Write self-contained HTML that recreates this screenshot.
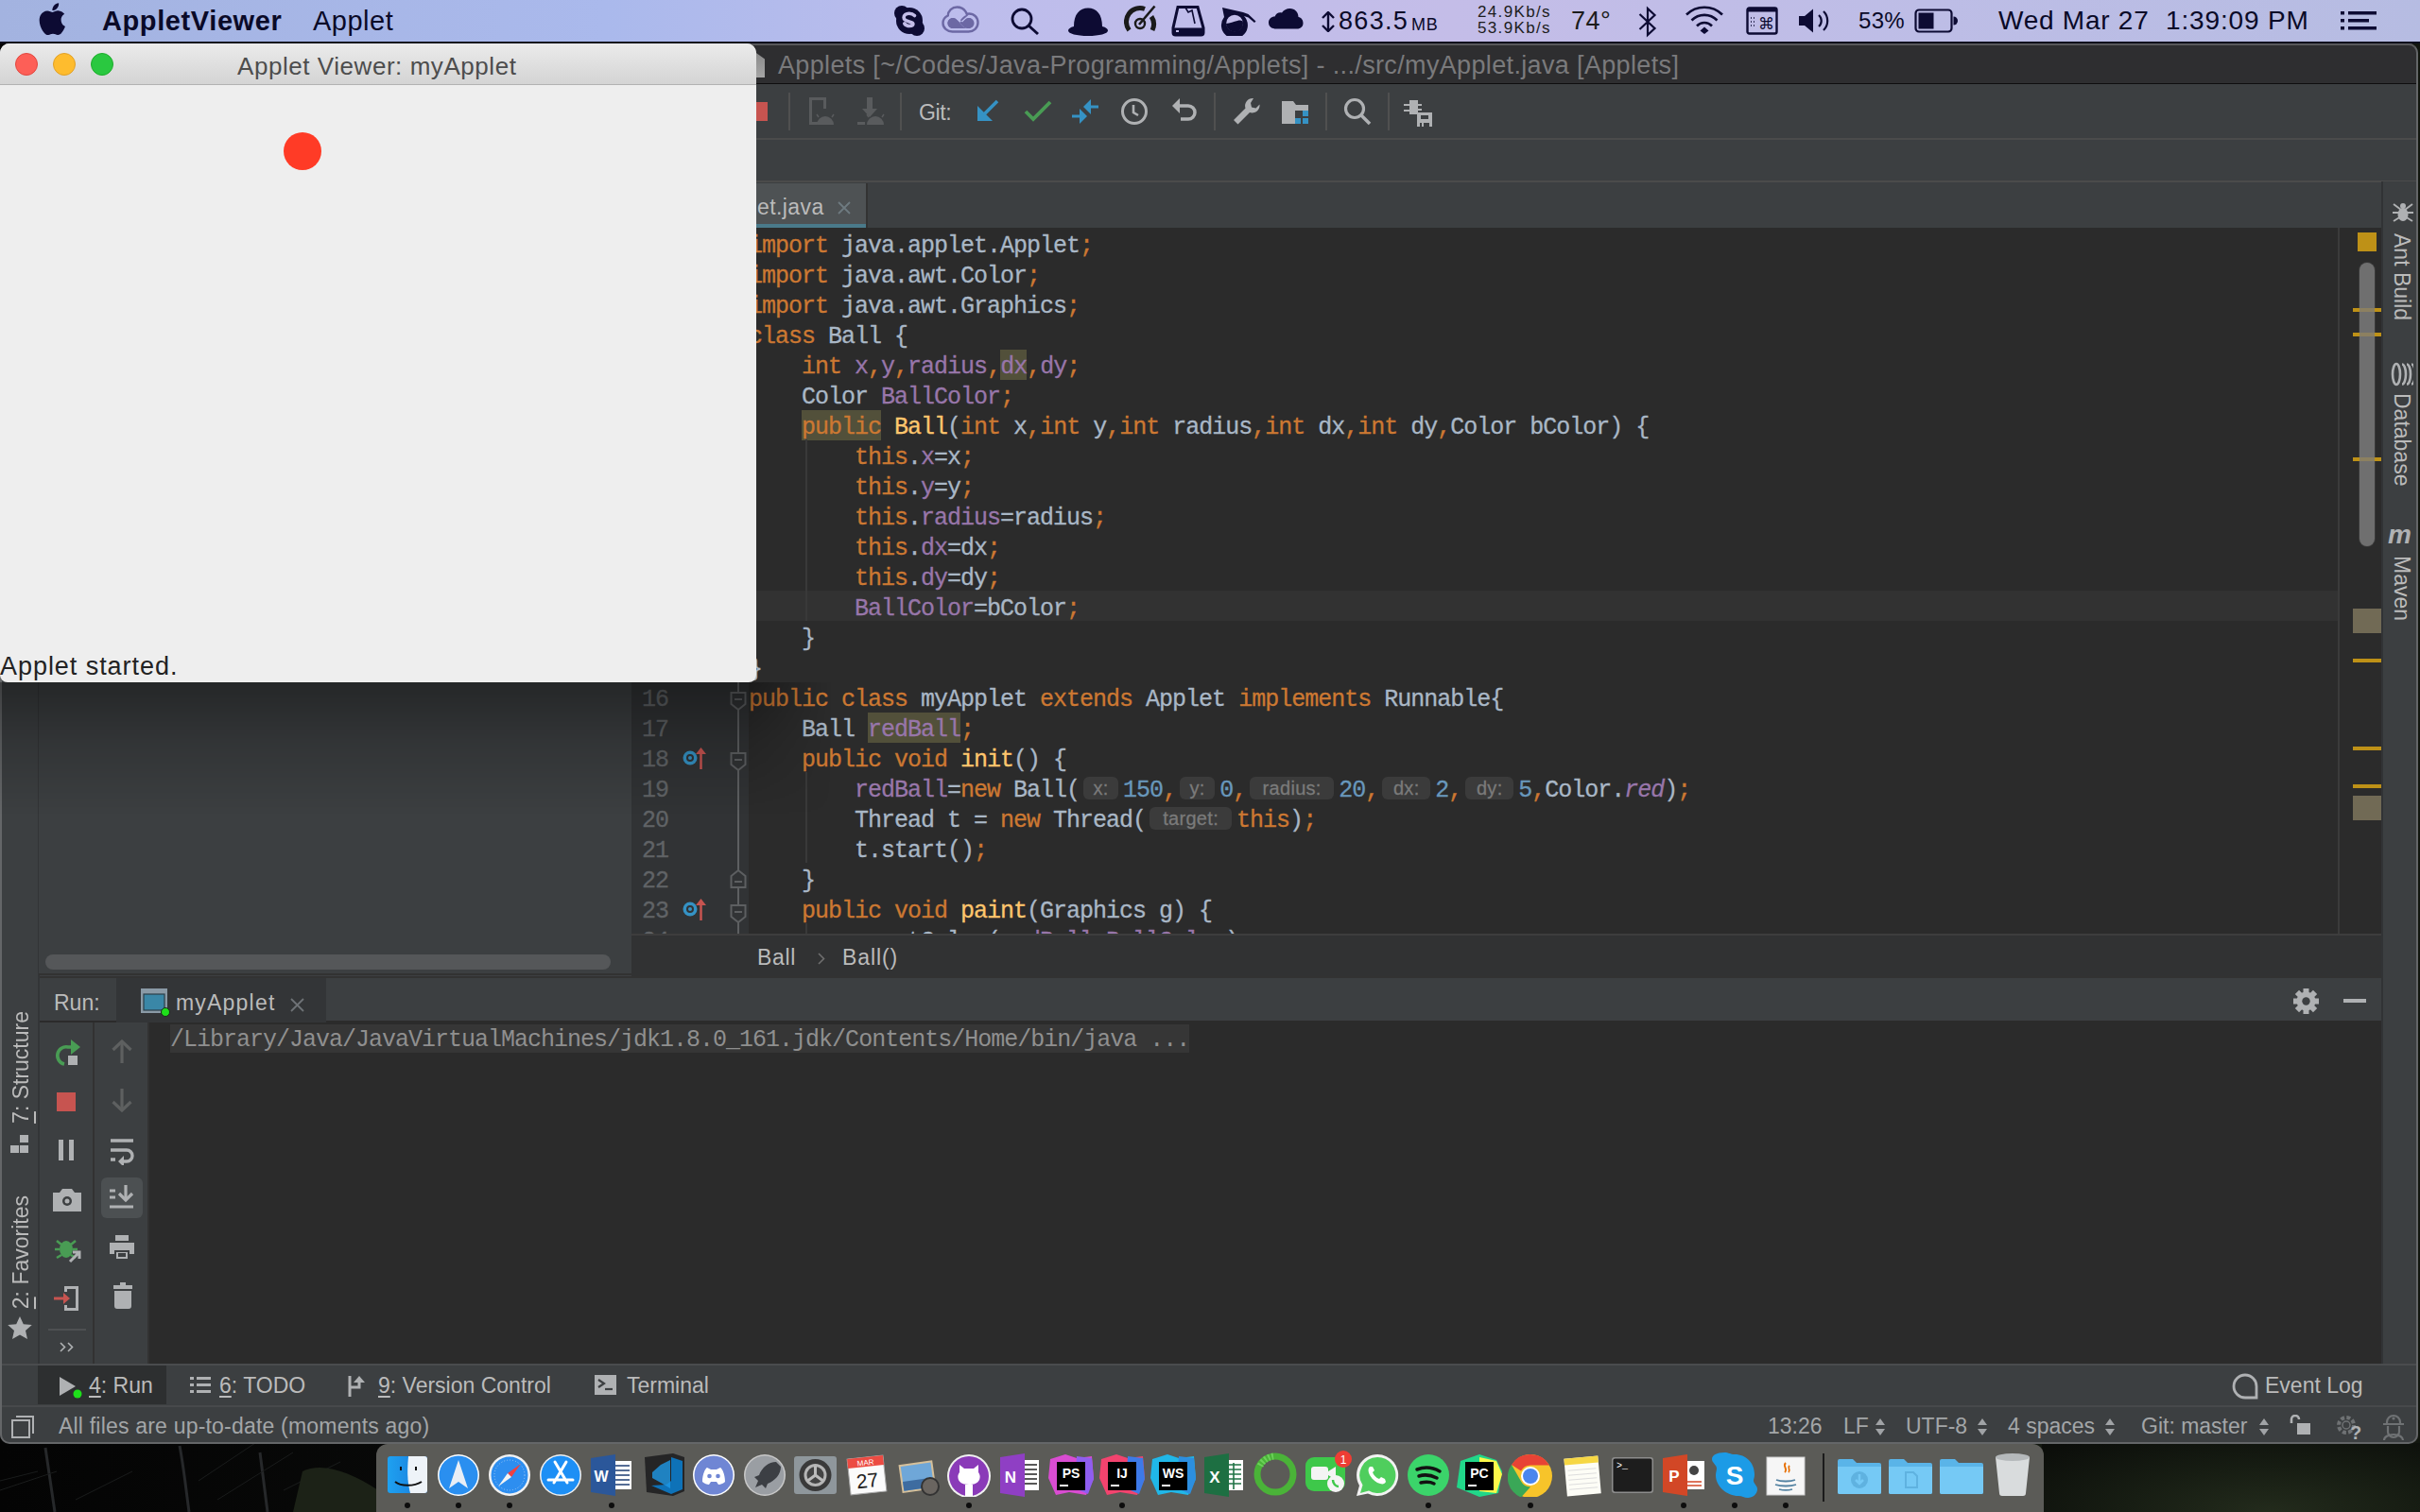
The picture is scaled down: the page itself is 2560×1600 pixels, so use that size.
<!DOCTYPE html>
<html><head><meta charset="utf-8">
<style>
*{margin:0;padding:0;box-sizing:border-box}
html,body{width:2560px;height:1600px;overflow:hidden;background:#101418;font-family:"Liberation Sans",sans-serif}
.a{position:absolute}
.mono{font-family:"Liberation Mono",monospace}
#desk{left:0;top:0;width:2560px;height:1600px;background:linear-gradient(90deg,#040404 0%,#0a0b0a 25%,#121510 50%,#151a12 75%,#12160f 100%)}
#menubar{left:0;top:0;width:2560px;height:44px;background:linear-gradient(90deg,#a3b3e0 0%,#aab9ec 25%,#bdbdec 40%,#c4bde8 60%,#bdbde6 80%,#b6bce2 100%);color:#0a0a28;font-size:29px;white-space:nowrap}
#mbline{left:0;top:44px;width:2560px;height:2px;background:#0c0d1c}
#ide{left:0;top:46px;width:2558px;height:1481px;background:#3c3f41;border-radius:10px;overflow:hidden}
#ititle{left:0;top:0;width:2558px;height:43px;background:#2e2e30;border-top:2px solid #5a5a5c;border-bottom:1px solid #0e0e0e}
#ititle span{position:absolute;left:823px;top:6px;font-size:27px;color:#7a7a7c;letter-spacing:0.35px}
#toolbar{left:0;top:44px;width:2558px;height:58px;background:#3c3f41;border-bottom:2px solid #4b4b4b}
#navbar{left:0;top:102px;width:2558px;height:45px;background:#3c3f41;border-bottom:2px solid #4b4b4b}
#lstripe{left:0;top:146px;width:42px;height:1252px;background:#3c3f41;border-right:2px solid #333537}
#rstripe{left:2519px;top:146px;width:39px;height:1252px;background:#3c3f41;border-left:2px solid #313335}
#proj{left:41px;top:146px;width:627px;height:840px;background:#3c3f41}
#tabs{left:668px;top:147px;width:1851px;height:49px;background:#3c3f41}
#gutter{left:668px;top:195px;width:124px;height:747px;background:#313335}
#editor{left:792px;top:195px;width:1727px;height:747px;background:#2b2b2b}
#bread{left:668px;top:942px;width:1851px;height:45px;background:#313233;border-top:2px solid #3d3d3d}
#runhdr{left:42px;top:987px;width:2477px;height:49px;background:#3c3f41;border-top:2px solid #323232;border-bottom:2px solid #2b2b2b}
#runtb{left:42px;top:1036px;width:116px;height:362px;background:#3c3f41}
#console{left:158px;top:1036px;width:2361px;height:362px;background:#2b2b2b}
#bottomtb{left:0;top:1397px;width:2558px;height:44px;background:#3c3f41;border-top:2px solid #4a4c4e}
#status{left:0;top:1441px;width:2558px;height:40px;background:#3c3f41;border-top:2px solid #47494b;color:#a3a6a8;font-size:23px}
#applet{left:0;top:46px;width:800px;height:676px;background:#eeeeee;border-radius:10px 10px 8px 8px;overflow:hidden}
#atitle{left:0;top:0;width:800px;height:44px;background:linear-gradient(#ebebeb,#d4d4d4);border-bottom:1px solid #b2b2b2}
#dock{left:398px;top:1528px;width:1764px;height:80px;background:#5b5b57;border-radius:12px 12px 0 0}
.code{font-family:"Liberation Mono",monospace;font-size:25px;letter-spacing:-1px;-webkit-text-stroke:0.3px currentColor;white-space:pre;color:#a9b7c6;position:absolute;line-height:32px}
.k{color:#cc7832}.sel{}.h{display:inline-block;height:24px;vertical-align:top;margin:1px 5px 0 4px;background:#3b3b3b;border-radius:6px;color:#7a7a7a;font-family:"Liberation Sans",sans-serif;font-size:20px;line-height:24px;text-align:center;letter-spacing:0.3px}.f{color:#9876aa}.m{color:#ffc66d}.n{color:#6897bb}
</style></head><body>
<div id="desk" class="a"></div>
<div class="a" style="left:2160px;top:1527px;width:400px;height:73px;background:radial-gradient(ellipse at 60% 100%,#232b1c 0%,#171d13 45%,#0a0c09 100%)"></div>
<svg class="a" style="left:0;top:1527px" width="400" height="73" viewBox="0 0 400 73"><g stroke="#26282a" stroke-width="3" fill="none"><path d="M48 5L58 73"/><path d="M190 3c4 20 6 40 10 70"/><path d="M275 10l8 63"/></g><g stroke="#1a1c1c" stroke-width="1" fill="none"><path d="M0 50L60 30M0 40l40-10M80 60l60-30M210 40l60-40M230 60l80-50M300 50l60-30"/></g><path d="M320 30c20-10 50 0 80 20v23h-90z" fill="#1c2217"/></svg>
<div id="menubar" class="a">
  <svg class="a" style="left:40px;top:3px" width="30" height="34" viewBox="0 0 30 34"><path fill="#0d0b33" d="M24.6 18.1c0-4.2 3.4-6.2 3.6-6.3-2-2.9-5.1-3.3-6.1-3.4-2.6-.3-5.1 1.5-6.4 1.5-1.3 0-3.4-1.5-5.6-1.5-2.9 0-5.5 1.7-7 4.3-3 5.2-.8 12.9 2.1 17.1 1.4 2.1 3.1 4.4 5.3 4.3 2.1-.1 2.9-1.4 5.5-1.4 2.5 0 3.3 1.4 5.5 1.3 2.3 0 3.7-2.1 5.1-4.2 1.6-2.4 2.3-4.7 2.3-4.8-.1 0-4.3-1.7-4.3-6.9zM20.4 5.7c1.2-1.4 2-3.4 1.7-5.4-1.7.1-3.7 1.1-4.9 2.5-1.1 1.3-2 3.3-1.8 5.3 1.9.1 3.8-1 5-2.4z"/></svg>
  <span class="a" style="left:108px;top:6px;font-weight:bold;letter-spacing:0.6px">AppletViewer</span>
  <span class="a" style="left:331px;top:6px;letter-spacing:0.5px">Applet</span>
  <!-- skype -->
  <svg class="a" style="left:945px;top:5px" width="34" height="34" viewBox="0 0 34 34"><circle cx="17" cy="17" r="14" fill="#0d0b33"/><circle cx="9" cy="9" r="8" fill="#0d0b33"/><circle cx="25" cy="25" r="8" fill="#0d0b33"/><path d="M22.5 11.5c-1.5-1.5-3.5-2.2-5.8-2.2-3.3 0-5.6 1.7-5.6 4.3 0 5.3 9.8 3.4 9.8 6.6 0 1.3-1.5 2.3-3.8 2.3-2.3 0-4-.9-5.3-2.5" fill="none" stroke="#c3bde9" stroke-width="3.6" stroke-linecap="round"/></svg>
  <!-- creative cloud -->
  <svg class="a" style="left:996px;top:6px" width="40" height="30" viewBox="0 0 40 30"><path d="M11.5 27.5h17c5.5 0 10-4 10-9.5S34.5 8.5 29 8.5c-1 0-1.5 .1-2.3 .3C25 4.5 21 1.5 16.5 1.5 11 1.5 7 5.5 6.8 10.5 3.5 12 1.5 15 1.5 18.5c0 5 4.5 9 10 9z" fill="none" stroke="#6c68a4" stroke-width="2.4"/><path d="M12 24c-3 0-5.5-2.5-5.5-5.5S9 13 12 13c2.2 0 3.5 1.2 5 2.8l5 5.2c1.5 1.6 2.8 3 5.5 3h1.5c3 0 5.5-2.5 5.5-5.5S32 13 29 13c-2.2 0-3.5 1.2-5 2.8l-1.8 1.9-2.4-2.5 1.8-1.9C23.5 11.2 26 9.5 29 9.5" fill="#6c68a4"/><path d="M12 24c-3 0-5.5-2.5-5.5-5.5S9 13 12 13c2.2 0 3.5 1.2 5 2.8l5 5.2c1.5 1.6 2.8 3 5.5 3z" fill="#6c68a4"/><path d="M27.5 24c3 0 6.5-2.5 6.5-5.5S31.5 13 29 13c-2.2 0-3.5 1.2-5 2.8l-2 2z" fill="#6c68a4"/></svg>
  <!-- search -->
  <svg class="a" style="left:1069px;top:8px" width="32" height="30" viewBox="0 0 32 30"><circle cx="12" cy="12" r="10" fill="none" stroke="#0d0b33" stroke-width="2.8"/><path d="M19 19l10 9" stroke="#0d0b33" stroke-width="3"/></svg>
  <!-- hat -->
  <svg class="a" style="left:1129px;top:7px" width="44" height="32" viewBox="0 0 44 32"><path fill="#0d0b33" d="M7 21C7 8 13 1.5 22 1.5S37 8 37 21c4 1 6 2.5 6 4.5 0 3-9 5.5-21 5.5S1 28.5 1 25.5c0-2 2-3.5 6-4.5z"/></svg>
  <!-- gauge -->
  <svg class="a" style="left:1189px;top:5px" width="36" height="30" viewBox="0 0 36 30"><path fill="none" stroke="#1a1a1a" stroke-width="5" d="M5.5 27A14.5 14.5 0 0 1 22 4.5"/><path fill="none" stroke="#1a1a1a" stroke-width="5" d="M29 12.5A14.5 14.5 0 0 1 30 27"/><circle cx="17" cy="20" r="5" fill="none" stroke="#1a1a1a" stroke-width="2.4"/><path d="M16 21L32.5 1.5" stroke="#1a1a1a" stroke-width="2.6"/></svg>
  <!-- disk -->
  <svg class="a" style="left:1239px;top:5px" width="36" height="34" viewBox="0 0 36 34"><path fill="none" stroke="#0d0b33" stroke-width="3" d="M7 2.5h21l6 22v5a2.5 2.5 0 0 1-2.5 2.5h-27A2.5 2.5 0 0 1 2 29.5v-5z"/><path fill="#0d0b33" d="M2 24.5h32v5a3 3 0 0 1-3 3H5a3 3 0 0 1-3-3z"/><rect x="5" y="27" width="3" height="2" fill="#c3bde9"/><path d="M15 3l3 5 4-2 3 14" fill="none" stroke="#0d0b33" stroke-width="1.6"/></svg>
  <!-- coffee pot -->
  <svg class="a" style="left:1291px;top:7px" width="40" height="31" viewBox="0 0 40 31"><path fill="#0d0b33" d="M2 1l22 5 5.5 2 8 7.5-1.5 1.5-6.5-5.5L25 10A14 14 0 1 1 4 11z"/><circle cx="15" cy="17.5" r="9.5" fill="#c3bde9"/><path fill="#0d0b33" d="M6 18c4-.5 8-2 12-3s6 0 6 2.5a9 9 0 0 1-18 .5z"/><circle cx="15" cy="17.5" r="9.5" fill="none" stroke="#0d0b33" stroke-width="1.5"/></svg>
  <!-- cloud -->
  <svg class="a" style="left:1341px;top:9px" width="38" height="24" viewBox="0 0 38 24"><path fill="#0d0b33" d="M9 21.5C5 21.5 1 19.5 1 15c0-4 3-6.5 6.5-6.5C9 5 12 3.5 15 4.5 17 1.5 20 0 23.5 0 29 0 32.5 4 32.5 9c3 .5 5 3 5 6.5 0 3.5-2.5 6-6.5 6z"/></svg>
  <!-- arrows -->
  <svg class="a" style="left:1398px;top:12px" width="14" height="22" viewBox="0 0 14 22"><path d="M7 2v18" stroke="#0d0b33" stroke-width="2.4"/><path d="M1 7l6-6 6 6M1 15l6 6 6-6" fill="none" stroke="#0d0b33" stroke-width="2.4"/></svg>
  <span class="a" style="left:1416px;top:7px;font-size:27px;letter-spacing:1.3px">863.5</span>
  <span class="a" style="left:1493px;top:16px;font-size:18px;letter-spacing:0.8px">MB</span>
  <div class="a" style="left:1563px;top:4px;font-size:17px;line-height:17px;letter-spacing:1.35px;color:#1c1c1c">24.9Kb/s<br>53.9Kb/s</div>
  <span class="a" style="left:1662px;top:7px;font-size:27px;color:#1c1c1c;letter-spacing:0.5px">74°</span>
  <!-- bluetooth -->
  <svg class="a" style="left:1733px;top:6px" width="20" height="34" viewBox="0 0 20 34"><path d="M1.5 9l16 15L10 31V3l7.5 7L1.5 25" fill="none" stroke="#0d0b33" stroke-width="2.2"/></svg>
  <!-- wifi -->
  <svg class="a" style="left:1782px;top:6px" width="42" height="31" viewBox="0 0 42 31"><path d="M2 9.5a27 27 0 0 1 38 0M7.5 15.5a19 19 0 0 1 27 0M13 21.5a11 11 0 0 1 16 0" fill="none" stroke="#0d0b33" stroke-width="2.6"/><path d="M16.5 26.5l4.5-4 4.5 4-4.5 3.5z" fill="#0d0b33"/></svg>
  <!-- cmd window -->
  <svg class="a" style="left:1847px;top:7px" width="34" height="30" viewBox="0 0 34 30"><rect x="1.5" y="1.5" width="31" height="27" rx="2" fill="none" stroke="#0d0b33" stroke-width="2.4"/><rect x="1.5" y="1.5" width="31" height="4" fill="#0d0b33"/><text x="21" y="24" font-size="17" font-family="Liberation Sans" fill="#0d0b33" text-anchor="middle">⌘</text><path d="M5 12h1M5 16h1M5 20h1M8 12h1M8 16h1M8 20h1" stroke="#0d0b33" stroke-width="1.5"/></svg>
  <!-- speaker -->
  <svg class="a" style="left:1903px;top:9px" width="34" height="26" viewBox="0 0 34 26"><path fill="#0d0b33" d="M0 8h6l9-7.5v25L6 18H0z"/><path d="M21 7a8 8 0 0 1 0 12M26 3a14 14 0 0 1 0 20" fill="none" stroke="#0d0b33" stroke-width="2.2"/></svg>
  <span class="a" style="left:1966px;top:8px;font-size:24px;letter-spacing:0.3px">53%</span>
  <svg class="a" style="left:2025px;top:9px" width="48" height="26" viewBox="0 0 48 26"><rect x="1.5" y="1.5" width="38" height="23" rx="3.5" fill="none" stroke="#0d0b33" stroke-width="2.2"/><rect x="4.5" y="4.5" width="16" height="17" fill="#0d0b33"/><path d="M41.5 8.5a4.5 4.5 0 0 1 0 9z" fill="#0d0b33"/></svg>
  <span class="a" style="left:2114px;top:6px;font-size:28px;letter-spacing:0.75px">Wed Mar 27</span>
  <span class="a" style="left:2291px;top:6px;font-size:28px;letter-spacing:0.85px">1:39:09 PM</span>
  <svg class="a" style="left:2476px;top:12px" width="38" height="20" viewBox="0 0 38 20"><path fill="#0d0b33" d="M0 0h4v3.5H0zM0 8h4v3.5H0zM0 16h4v3.5H0zM8 0h30v3.5H8zM8 8h22v3.5H8zM8 16h30v3.5H8z"/></svg>
</div>
<div id="mbline" class="a"></div>

<div id="ide" class="a">
  <div id="ititle" class="a"><div class="a" style="left:790px;top:7px;width:19px;height:27px;background:linear-gradient(#8a8a8a,#a5a5a5);clip-path:polygon(0 0,45% 0,100% 28%,100% 100%,0 100%)"></div><span>Applets [~/Codes/Java-Programming/Applets] - .../src/myApplet.java [Applets]</span></div>
  <div id="toolbar" class="a">
  <div class="a" style="left:790px;top:18px;width:22px;height:20px;background:#c75450"></div>
  <div class="a" style="left:834px;top:8px;width:2px;height:40px;background:#505050"></div>
  <svg class="a" style="left:855px;top:12px" width="30" height="32" viewBox="0 0 30 32"><path fill="#595b5d" d="M1 1h18v12h-3V4H4v23h6v3H1z"/><path fill="#595b5d" d="M9 30a9 9 0 0 1 18 0z"/><path d="M11 22l-2-3M25 22l2-3" stroke="#595b5d" stroke-width="1.5"/></svg>
  <svg class="a" style="left:907px;top:12px" width="30" height="32" viewBox="0 0 30 32"><path fill="#595b5d" d="M10 1h6v12h5l-8 9-8-9h5zM0 27h8v3H0z"/><path fill="#595b5d" d="M10 30a9 9 0 0 1 18 0z"/><path d="M12 22l-2-3M26 22l2-3" stroke="#595b5d" stroke-width="1.5"/></svg>
  <div class="a" style="left:952px;top:8px;width:2px;height:40px;background:#505050"></div>
  <span class="a" style="left:972px;top:16px;font-size:23px;color:#bbbbbb;letter-spacing:-0.4px">Git:</span>
  <svg class="a" style="left:1033px;top:15px" width="24" height="24" viewBox="0 0 24 24"><path d="M22 2L5 19" stroke="#3592c4" stroke-width="3.5"/><path d="M1 7v16h16z" fill="#3592c4"/></svg>
  <svg class="a" style="left:1083px;top:15px" width="30" height="24" viewBox="0 0 30 24"><path d="M2 13l8 8L28 3" fill="none" stroke="#499c54" stroke-width="3.8"/></svg>
  <svg class="a" style="left:1133px;top:13px" width="30" height="30" viewBox="0 0 30 30"><path d="M1 20h12M29 10H17" stroke="#3592c4" stroke-width="3"/><path d="M9 12l8 8-8 8zM21 2l-8 8 8 8z" fill="#3592c4"/></svg>
  <svg class="a" style="left:1185px;top:13px" width="30" height="30" viewBox="0 0 30 30"><circle cx="15" cy="15" r="12.5" fill="none" stroke="#afb1b3" stroke-width="3"/><path d="M14 8v8l5 3" fill="none" stroke="#afb1b3" stroke-width="2.6"/></svg>
  <svg class="a" style="left:1239px;top:13px" width="28" height="28" viewBox="0 0 28 28"><path d="M6 9h12a7 7 0 0 1 0 14h-8" fill="none" stroke="#afb1b3" stroke-width="3.5"/><path d="M1 9l8-8v16z" fill="#afb1b3"/></svg>
  <div class="a" style="left:1284px;top:8px;width:2px;height:40px;background:#505050"></div>
  <svg class="a" style="left:1304px;top:13px" width="30" height="30" viewBox="0 0 30 30"><path fill="#afb1b3" d="M22 1a8 8 0 0 0-8.5 10.5L1 24l4.5 4.5L18 16a8 8 0 0 0 10.5-8.5l-4 4-4.5-1-1-4.5z"/></svg>
  <svg class="a" style="left:1356px;top:17px" width="30" height="26" viewBox="0 0 30 26"><path fill="#afb1b3" d="M0 0h12l3 4h13v6H14v14H0z"/><path fill="#3592c4" d="M22 10h6v6h-6zM14 18h6v6h-6zM22 18h6v6h-6z"/></svg>
  <div class="a" style="left:1402px;top:8px;width:2px;height:40px;background:#505050"></div>
  <svg class="a" style="left:1421px;top:13px" width="30" height="30" viewBox="0 0 30 30"><circle cx="12" cy="12" r="9.5" fill="none" stroke="#afb1b3" stroke-width="3.2"/><path d="M18.5 18.5L28 28" stroke="#afb1b3" stroke-width="3.6"/></svg>
  <div class="a" style="left:1468px;top:8px;width:2px;height:40px;background:#505050"></div>
  <svg class="a" style="left:1485px;top:15px" width="32" height="30" viewBox="0 0 32 30"><path fill="#afb1b3" d="M6 1h9v4h4v2h-4v3h4v2h-4v4H6v-3H0v-2h6V7H0V5h6z"/><path fill="#afb1b3" d="M14 14h16v15h-3v-4h-10v4h-3zM18 21h8v-4h-8z"/><path fill="#afb1b3" d="M19 25h2v4h-2z"/></svg>
</div>
  <div id="navbar" class="a"></div>
  <div id="lstripe" class="a">
  <div class="a" style="left:0;top:0;width:2px;height:1252px;background:#5b5e60"></div>
  <div class="a" style="left:8px;top:878px;writing-mode:vertical-rl;transform:rotate(180deg);font-size:23px;line-height:28px;color:#bbbbbb;white-space:nowrap"><u style="text-underline-offset:2px">7</u>: Structure</div>
  <svg class="a" style="left:10px;top:1009px" width="22" height="20" viewBox="0 0 22 20"><path fill="#afb1b3" d="M10 0h9v8h-9zM0 11h9v8H0zM10 11h9v8h-9z" transform="translate(1 0)"/></svg>
  <div class="a" style="left:8px;top:1073px;writing-mode:vertical-rl;transform:rotate(180deg);font-size:23px;line-height:28px;color:#bbbbbb;white-space:nowrap"><u style="text-underline-offset:2px">2</u>: Favorites</div>
  <svg class="a" style="left:8px;top:1201px" width="26" height="25" viewBox="0 0 26 25"><path fill="#afb1b3" d="M13 0l3.8 8.2 9 .9-6.8 6 2 8.9L13 19.4 5 24l2-8.9-6.8-6 9-.9z"/></svg>
</div>
  <div id="rstripe" class="a">
  <svg class="a" style="left:8px;top:20px" width="24" height="24" viewBox="0 0 24 24"><g fill="#afb1b3"><ellipse cx="13" cy="15" rx="5.5" ry="7"/><circle cx="13" cy="6" r="3"/><path d="M3 4l8 6M23 4l-8 6M2 13h9M24 13h-9M3 22l8-5M23 22l-8-5" stroke="#afb1b3" stroke-width="2"/></g></svg>
  <div class="a" style="left:6px;top:55px;writing-mode:vertical-rl;font-size:23px;line-height:28px;color:#bbbbbb;white-space:nowrap">Ant Build</div>
  <svg class="a" style="left:8px;top:191px" width="24" height="26" viewBox="0 0 24 26"><g fill="none" stroke="#afb1b3" stroke-width="2.6"><ellipse cx="6" cy="13" rx="4" ry="11"/><path d="M12 2.5a4 10.5 0 0 1 0 21M17 2.5a4 10.5 0 0 1 0 21M22 2.5a4 10.5 0 0 1 0 21"/></g></svg>
  <div class="a" style="left:6px;top:224px;writing-mode:vertical-rl;font-size:23px;line-height:28px;color:#bbbbbb;white-space:nowrap">Database</div>
  <div class="a" style="left:5px;top:360px;font-size:28px;line-height:28px;font-weight:bold;font-style:italic;color:#afb1b3">m</div>
  <div class="a" style="left:6px;top:396px;writing-mode:vertical-rl;font-size:23px;line-height:28px;color:#bbbbbb;white-space:nowrap">Maven</div>
</div>
  <div id="proj" class="a">
  <div class="a" style="left:7px;top:818px;width:598px;height:16px;border-radius:8px;background:#555759"></div>
  <div class="a" style="left:0;top:838px;width:627px;height:2px;background:#323232"></div>
</div>
  <div id="tabs" class="a">
  <div class="a" style="left:0;top:1px;width:248px;height:43px;background:#4e5254"></div>
  <div class="a" style="left:0;top:44px;width:248px;height:6px;background:#4a7a8a"></div>
  <div class="a" style="left:248px;top:1px;width:2px;height:49px;background:#333"></div>
  <span class="a" style="left:54px;top:13px;font-size:23px;color:#bbbbbb;white-space:nowrap;letter-spacing:0.4px">myApplet.java</span>
  <svg class="a" style="left:218px;top:20px" width="14" height="14" viewBox="0 0 14 14"><path d="M1 1l12 12M13 1L1 13" stroke="#6e7a80" stroke-width="1.8"/></svg>
</div>
  <div id="gutter" class="a">
  <svg class="a" style="left:0;top:0" width="124" height="747"><path d="M113 481 V747" stroke="#5d5f61" stroke-width="2"/><path d="M105.5 492.0 h15 v12 l-7.5 6 l-7.5 -6 z" fill="#313335" stroke="#5d5f61" stroke-width="2"/><path d="M109 499.0 h8" stroke="#5d5f61" stroke-width="2"/><path d="M105.5 556.0 h15 v12 l-7.5 6 l-7.5 -6 z" fill="#313335" stroke="#5d5f61" stroke-width="2"/><path d="M109 563.0 h8" stroke="#5d5f61" stroke-width="2"/><path d="M105.5 686.0 l7.5 -6 l7.5 6 v12 h-15 z" fill="#313335" stroke="#5d5f61" stroke-width="2"/><path d="M109 692.0 h8" stroke="#5d5f61" stroke-width="2"/><path d="M105.5 717.0 h15 v12 l-7.5 6 l-7.5 -6 z" fill="#313335" stroke="#5d5f61" stroke-width="2"/><path d="M109 724.0 h8" stroke="#5d5f61" stroke-width="2"/><circle cx="62" cy="561" r="7.5" fill="#3592c4"/><circle cx="62" cy="561" r="3" fill="none" stroke="#313335" stroke-width="2"/><path d="M73.5 573 v-18" stroke="#c75450" stroke-width="2.5"/><path d="M68 557 l5.5 -7 l5.5 7 z" fill="#c75450"/><circle cx="62" cy="721" r="7.5" fill="#3592c4"/><circle cx="62" cy="721" r="3" fill="none" stroke="#313335" stroke-width="2"/><path d="M73.5 733 v-18" stroke="#c75450" stroke-width="2.5"/><path d="M68 717 l5.5 -7 l5.5 7 z" fill="#c75450"/></svg><div class="a" style="left:0;top:0;width:124px;height:747px"><div class="a mono" style="left:0;top:480px;width:39px;text-align:right;font-size:25px;letter-spacing:-1px;line-height:32px;color:#606366;margin-top:4px;-webkit-text-stroke:0.3px #606366">16</div>
<div class="a mono" style="left:0;top:512px;width:39px;text-align:right;font-size:25px;letter-spacing:-1px;line-height:32px;color:#606366;margin-top:4px;-webkit-text-stroke:0.3px #606366">17</div>
<div class="a mono" style="left:0;top:544px;width:39px;text-align:right;font-size:25px;letter-spacing:-1px;line-height:32px;color:#606366;margin-top:4px;-webkit-text-stroke:0.3px #606366">18</div>
<div class="a mono" style="left:0;top:576px;width:39px;text-align:right;font-size:25px;letter-spacing:-1px;line-height:32px;color:#606366;margin-top:4px;-webkit-text-stroke:0.3px #606366">19</div>
<div class="a mono" style="left:0;top:608px;width:39px;text-align:right;font-size:25px;letter-spacing:-1px;line-height:32px;color:#606366;margin-top:4px;-webkit-text-stroke:0.3px #606366">20</div>
<div class="a mono" style="left:0;top:640px;width:39px;text-align:right;font-size:25px;letter-spacing:-1px;line-height:32px;color:#606366;margin-top:4px;-webkit-text-stroke:0.3px #606366">21</div>
<div class="a mono" style="left:0;top:672px;width:39px;text-align:right;font-size:25px;letter-spacing:-1px;line-height:32px;color:#606366;margin-top:4px;-webkit-text-stroke:0.3px #606366">22</div>
<div class="a mono" style="left:0;top:704px;width:39px;text-align:right;font-size:25px;letter-spacing:-1px;line-height:32px;color:#606366;margin-top:4px;-webkit-text-stroke:0.3px #606366">23</div>
<div class="a mono" style="left:0;top:736px;width:39px;text-align:right;font-size:25px;letter-spacing:-1px;line-height:32px;color:#606366;margin-top:4px;-webkit-text-stroke:0.3px #606366">24</div></div>
</div>
  <div id="editor" class="a">
  <div class="a" style="left:0;top:384px;width:1681px;height:32px;background:#323232"></div>
  <div class="a" style="left:266px;top:129px;width:28px;height:32px;background:#52503a"></div>
  <div class="a" style="left:56px;top:193px;width:84px;height:32px;background:#52503a"></div>
  <div class="a" style="left:126px;top:513px;width:98px;height:32px;background:#52503a"></div>
  <div class="a" style="left:60px;top:224px;width:2px;height:192px;background:#393939"></div>
  <div class="a" style="left:60px;top:576px;width:2px;height:96px;background:#393939"></div>
  <div class="a" style="left:60px;top:736px;width:2px;height:12px;background:#393939"></div>
<div class="code" style="left:0;margin-top:4px;top:0px"><span class="k">import</span> java.applet.Applet<span class="k">;</span></div>
<div class="code" style="left:0;margin-top:4px;top:32px"><span class="k">import</span> java.awt.Color<span class="k">;</span></div>
<div class="code" style="left:0;margin-top:4px;top:64px"><span class="k">import</span> java.awt.Graphics<span class="k">;</span></div>
<div class="code" style="left:0;margin-top:4px;top:96px"><span class="k">class</span> Ball {</div>
<div class="code" style="left:0;margin-top:4px;top:128px">    <span class="k">int</span> <span class="f">x</span><span class="k">,</span><span class="f">y</span><span class="k">,</span><span class="f">radius</span><span class="k">,</span><span class="sel"><span class="f">dx</span></span><span class="k">,</span><span class="f">dy</span><span class="k">;</span></div>
<div class="code" style="left:0;margin-top:4px;top:160px">    Color <span class="f">BallColor</span><span class="k">;</span></div>
<div class="code" style="left:0;margin-top:4px;top:192px">    <span class="sel"><span class="k">public</span></span> <span class="m">Ball</span>(<span class="k">int</span> x<span class="k">,</span><span class="k">int</span> y<span class="k">,</span><span class="k">int</span> radius<span class="k">,</span><span class="k">int</span> dx<span class="k">,</span><span class="k">int</span> dy<span class="k">,</span>Color bColor) {</div>
<div class="code" style="left:0;margin-top:4px;top:224px">        <span class="k">this</span>.<span class="f">x</span>=x<span class="k">;</span></div>
<div class="code" style="left:0;margin-top:4px;top:256px">        <span class="k">this</span>.<span class="f">y</span>=y<span class="k">;</span></div>
<div class="code" style="left:0;margin-top:4px;top:288px">        <span class="k">this</span>.<span class="f">radius</span>=radius<span class="k">;</span></div>
<div class="code" style="left:0;margin-top:4px;top:320px">        <span class="k">this</span>.<span class="f">dx</span>=dx<span class="k">;</span></div>
<div class="code" style="left:0;margin-top:4px;top:352px">        <span class="k">this</span>.<span class="f">dy</span>=dy<span class="k">;</span></div>
<div class="code" style="left:0;margin-top:4px;top:384px">        <span class="f">BallColor</span>=bColor<span class="k">;</span></div>
<div class="code" style="left:0;margin-top:4px;top:416px">    }</div>
<div class="code" style="left:0;margin-top:4px;top:448px">}</div>
<div class="code" style="left:0;margin-top:4px;top:480px"><span class="k">public class</span> myApplet <span class="k">extends</span> Applet <span class="k">implements</span> Runnable{</div>
<div class="code" style="left:0;margin-top:4px;top:512px">    Ball <span class="sel"><span class="f">redBall</span></span><span class="k">;</span></div>
<div class="code" style="left:0;margin-top:4px;top:544px">    <span class="k">public void</span> <span class="m">init</span>() {</div>
<div class="code" style="left:0;margin-top:4px;top:576px">        <span class="f">redBall</span>=<span class="k">new</span> Ball(<span class="h" style="width:37px">x:</span><span class="n">150</span><span class="k">,</span><span class="h" style="width:37px">y:</span><span class="n">0</span><span class="k">,</span><span class="h" style="width:89px">radius:</span><span class="n">20</span><span class="k">,</span><span class="h" style="width:51px">dx:</span><span class="n">2</span><span class="k">,</span><span class="h" style="width:51px">dy:</span><span class="n">5</span><span class="k">,</span>Color.<i class="f">red</i>)<span class="k">;</span></div>
<div class="code" style="left:0;margin-top:4px;top:608px">        Thread t = <span class="k">new</span> Thread(<span class="h" style="width:87px">target:</span><span class="k">this</span>)<span class="k">;</span></div>
<div class="code" style="left:0;margin-top:4px;top:640px">        t.start()<span class="k">;</span></div>
<div class="code" style="left:0;margin-top:4px;top:672px">    }</div>
<div class="code" style="left:0;margin-top:4px;top:704px">    <span class="k">public void</span> <span class="m">paint</span>(Graphics g) {</div>
<div class="code" style="left:0;margin-top:4px;top:736px">        g.setColor(<span class="f">redBall</span>.<span class="f">BallColor</span>)<span class="k">;</span></div>
  <div class="a" style="left:1681px;top:0;width:2px;height:747px;background:#3b3b3b"></div>
  <div class="a" style="left:1683px;top:0;width:44px;height:747px;background:#2b2b2b"></div>
  <div class="a" style="left:1702px;top:5px;width:20px;height:20px;background:#be9117"></div>
  <div class="a" style="left:1704px;top:37px;width:16px;height:300px;border-radius:8px;background:#6f6f6f;box-shadow:0 0 0 1px #3a3a3a"></div>
  <div class="a" style="left:1697px;top:85px;width:30px;height:4px;background:#be9117"></div>
  <div class="a" style="left:1704px;top:85px;width:16px;height:4px;background:#8c8060"></div>
  <div class="a" style="left:1697px;top:111px;width:30px;height:4px;background:#be9117"></div>
  <div class="a" style="left:1704px;top:111px;width:16px;height:4px;background:#8c8060"></div>
  <div class="a" style="left:1697px;top:243px;width:30px;height:4px;background:#be9117"></div>
  <div class="a" style="left:1704px;top:243px;width:16px;height:4px;background:#8c8060"></div>
  <div class="a" style="left:1697px;top:403px;width:30px;height:26px;background:#716a55"></div>
  <div class="a" style="left:1697px;top:456px;width:30px;height:4px;background:#be9117"></div>
  <div class="a" style="left:1697px;top:549px;width:30px;height:4px;background:#be9117"></div>
  <div class="a" style="left:1697px;top:589px;width:30px;height:4px;background:#be9117"></div>
  <div class="a" style="left:1697px;top:601px;width:30px;height:26px;background:#716a55"></div>
</div>
  <div id="bread" class="a">
  <span class="a" style="left:133px;top:10px;font-size:23px;color:#bbbbbb;letter-spacing:0.7px">Ball</span>
  <svg class="a" style="left:197px;top:18px" width="8" height="13" viewBox="0 0 8 13"><path d="M1 1l5.5 5.5L1 12" fill="none" stroke="#6e6e6e" stroke-width="1.6"/></svg>
  <span class="a" style="left:223px;top:10px;font-size:23px;color:#bbbbbb;letter-spacing:0.9px">Ball()</span>
</div>
  <div id="runhdr" class="a">
  <div class="a" style="left:81px;top:0;width:222px;height:47px;background:#333537"></div>
  <span class="a" style="left:15px;top:13px;font-size:23px;color:#bbbbbb">Run:</span>
  <svg class="a" style="left:106px;top:10px" width="34" height="32" viewBox="0 0 34 32"><rect x="1" y="1" width="28" height="26" fill="#8a9aa6"/><rect x="4" y="7" width="22" height="17" fill="#3a87a7" stroke="#2c3e48" stroke-width="1.2"/><circle cx="27" cy="26" r="4.5" fill="#1ee01a" stroke="#1b2a1b" stroke-width="1"/></svg>
  <span class="a" style="left:144px;top:13px;font-size:23px;color:#bbbbbb;letter-spacing:1.2px">myApplet</span>
  <svg class="a" style="left:265px;top:21px" width="15" height="15" viewBox="0 0 15 15"><path d="M1 1l13 13M14 1L1 14" stroke="#6e7276" stroke-width="1.8"/></svg>
  <svg class="a" style="left:2384px;top:11px" width="27" height="27" viewBox="0 0 27 27"><g fill="#afb1b3" transform="translate(13.5 13.5)"><rect x="-3" y="-13.5" width="6" height="6" transform="rotate(0)"/><rect x="-3" y="-13.5" width="6" height="6" transform="rotate(45)"/><rect x="-3" y="-13.5" width="6" height="6" transform="rotate(90)"/><rect x="-3" y="-13.5" width="6" height="6" transform="rotate(135)"/><rect x="-3" y="-13.5" width="6" height="6" transform="rotate(180)"/><rect x="-3" y="-13.5" width="6" height="6" transform="rotate(225)"/><rect x="-3" y="-13.5" width="6" height="6" transform="rotate(270)"/><rect x="-3" y="-13.5" width="6" height="6" transform="rotate(315)"/><circle r="10"/><circle r="4.2" fill="#3c3f41"/></g></svg>
  <div class="a" style="left:2437px;top:22px;width:24px;height:4px;background:#afb1b3"></div>
</div>
  <div id="runtb" class="a">
  <div class="a" style="left:56px;top:0;width:2px;height:361px;background:#323232"></div>
  <div class="a" style="left:114px;top:0;width:2px;height:361px;background:#323232"></div>
  <svg class="a" style="left:16px;top:18px" width="28" height="30" viewBox="0 0 28 30"><path d="M10 26A9 9 0 0 1 14 8h4" fill="none" stroke="#499c54" stroke-width="3.6"/><path d="M17 0l10 8-10 8z" fill="#499c54"/><rect x="14" y="17" width="10" height="10" fill="#afb1b3"/></svg>
  <div class="a" style="left:18px;top:74px;width:20px;height:20px;background:#c75450"></div>
  <div class="a" style="left:20px;top:124px;width:5px;height:22px;background:#afb1b3"></div>
  <div class="a" style="left:31px;top:124px;width:5px;height:22px;background:#afb1b3"></div>
  <svg class="a" style="left:14px;top:176px" width="30" height="24" viewBox="0 0 30 24"><path fill="#afb1b3" d="M0 4h7l3-4h10l3 4h7v20H0z"/><circle cx="15" cy="13" r="5" fill="#3c3f41"/><circle cx="15" cy="13" r="2.5" fill="#afb1b3"/></svg>
  <svg class="a" style="left:16px;top:225px" width="30" height="30" viewBox="0 0 30 30"><g fill="#499c54"><ellipse cx="12" cy="15" rx="7" ry="9"/><path d="M2 6l5 4M22 6l-5 4M0 15h5M24 15h-5M2 24l5-3M22 24l-5-3" stroke="#499c54" stroke-width="2.6"/></g><path d="M16 28l10-10M19 18h7v7" fill="none" stroke="#afb1b3" stroke-width="3"/></svg>
  <svg class="a" style="left:14px;top:277px" width="30" height="30" viewBox="0 0 30 30"><path d="M12 2h15v26H12v-6h3v3h9V5h-9v3h-3z" fill="#afb1b3"/><path d="M1 15h13" stroke="#c75450" stroke-width="3.2"/><path d="M11 9l7 6-7 6z" fill="#c75450"/></svg>
  <div class="a" style="left:9px;top:324px;width:40px;height:2px;background:#4e5052"></div>
  <svg class="a" style="left:21px;top:338px" width="16" height="11" viewBox="0 0 16 11"><path d="M1 1l4.5 4.5L1 10M9 1l4.5 4.5L9 10" fill="none" stroke="#afb1b3" stroke-width="1.6"/></svg>
  <svg class="a" style="left:76px;top:18px" width="22" height="26" viewBox="0 0 22 26"><path d="M11 3v22" stroke="#5e6060" stroke-width="3.2"/><path d="M1.5 11L11 2l9.5 9" fill="none" stroke="#5e6060" stroke-width="3.2"/></svg>
  <svg class="a" style="left:76px;top:69px" width="22" height="26" viewBox="0 0 22 26"><path d="M11 1v22" stroke="#5e6060" stroke-width="3.2"/><path d="M1.5 15l9.5 9 9.5-9" fill="none" stroke="#5e6060" stroke-width="3.2"/></svg>
  <svg class="a" style="left:74px;top:121px" width="28" height="30" viewBox="0 0 28 30"><path d="M1 4h24M1 14h17a6 6 0 0 1 0 12h-5M1 24h5" fill="none" stroke="#afb1b3" stroke-width="3.4"/><path d="M15 20l-6 6 6 6z" fill="#afb1b3"/></svg>
  <div class="a" style="left:65px;top:164px;width:44px;height:43px;border-radius:6px;background:#4c5052"></div>
  <svg class="a" style="left:74px;top:172px" width="26" height="26" viewBox="0 0 26 26"><path d="M0 6h6M0 13h6M0 23h25" stroke="#afb1b3" stroke-width="3.2"/><path d="M17 0v14" stroke="#afb1b3" stroke-width="3.2"/><path d="M10 9l7 7 7-7" fill="none" stroke="#afb1b3" stroke-width="3.2"/></svg>
  <svg class="a" style="left:74px;top:225px" width="26" height="26" viewBox="0 0 26 26"><path fill="#afb1b3" d="M6 0h14v6H6zM0 8h26v12h-5v-4H5v4H0zM7 18h12v7H7z"/><rect x="9" y="19" width="8" height="4" fill="#3c3f41"/></svg>
  <svg class="a" style="left:78px;top:275px" width="20" height="28" viewBox="0 0 20 28"><path fill="#afb1b3" d="M7 0h6v3h7v4H0V3h7zM1 9h18v16a3 3 0 0 1-3 3H4a3 3 0 0 1-3-3z"/></svg>
</div>
  <div id="console" class="a">
  <div class="a mono" style="left:22px;top:2px;height:30px;line-height:33px;background:#363636;color:#8f8f8f;font-size:25px;letter-spacing:-1px;white-space:pre;padding-right:0">/Library/Java/JavaVirtualMachines/jdk1.8.0_161.jdk/Contents/Home/bin/java ...</div>
</div>
  <div id="bottomtb" class="a">
  <div class="a" style="left:40px;top:0;width:136px;height:41px;background:#2d2f30"></div>
  <svg class="a" style="left:62px;top:11px" width="26" height="24" viewBox="0 0 26 24"><path d="M1 1l17 10L1 21z" fill="#afb1b3"/><circle cx="20" cy="19" r="4.5" fill="#1ee01a"/></svg>
  <span class="a" style="left:94px;top:8px;font-size:23px;color:#bbbbbb;letter-spacing:0px"><u style="text-underline-offset:3px">4</u>: Run</span>
  <svg class="a" style="left:201px;top:12px" width="22" height="18" viewBox="0 0 22 18"><path fill="#afb1b3" d="M0 0h4v3H0zM7 0h15v3H7zM0 7h4v3H0zM7 7h15v3H7zM0 14h4v3H0zM7 14h15v3H7z"/></svg>
  <span class="a" style="left:232px;top:8px;font-size:23px;color:#bbbbbb;letter-spacing:0px"><u style="text-underline-offset:3px">6</u>: TODO</span>
  <svg class="a" style="left:368px;top:10px" width="24" height="24" viewBox="0 0 24 24"><path d="M2 1v22M2 13h10V5" fill="none" stroke="#afb1b3" stroke-width="3"/><path d="M6 8l6-7 6 7z" fill="#afb1b3"/><path d="M12 5h10" stroke="#afb1b3" stroke-width="3" opacity="0"/></svg>
  <span class="a" style="left:400px;top:8px;font-size:23px;color:#bbbbbb;letter-spacing:0px"><u style="text-underline-offset:3px">9</u>: Version Control</span>
  <svg class="a" style="left:629px;top:10px" width="23" height="21" viewBox="0 0 23 21"><rect x="0" y="0" width="23" height="21" fill="#afb1b3"/><path d="M4 5l6 4-6 4" fill="none" stroke="#3c3f41" stroke-width="2.2"/><path d="M11 15h8" stroke="#3c3f41" stroke-width="2.2"/></svg>
  <span class="a" style="left:663px;top:8px;font-size:23px;color:#bbbbbb;letter-spacing:0px">Terminal</span>
  <svg class="a" style="left:2361px;top:8px" width="28" height="28" viewBox="0 0 28 28"><path d="M26 26V14A12 12 0 1 0 14 26z" fill="none" stroke="#afb1b3" stroke-width="2.8"/></svg>
  <span class="a" style="left:2396px;top:8px;font-size:23px;color:#bbbbbb;letter-spacing:0px">Event Log</span>
</div>
  <div id="status" class="a">
  <svg class="a" style="left:11px;top:8px" width="26" height="26" viewBox="0 0 26 26"><path d="M6 2h18v18" fill="none" stroke="#afb1b3" stroke-width="2"/><rect x="2" y="6" width="18" height="18" fill="none" stroke="#afb1b3" stroke-width="2"/></svg>
  <span class="a" style="left:62px;top:7px;letter-spacing:0.2px">All files are up-to-date (moments ago)</span>
  <span class="a" style="left:1870px;top:7px;letter-spacing:0px">13:26</span>
  <span class="a" style="left:1950px;top:7px;letter-spacing:0px">LF</span>
  <span class="a" style="left:2016px;top:7px;letter-spacing:0px">UTF-8</span>
  <span class="a" style="left:2124px;top:7px;letter-spacing:0px">4 spaces</span>
  <span class="a" style="left:2265px;top:7px;letter-spacing:0px">Git: master</span>
  <svg class="a" style="left:1983px;top:11px" width="12" height="20" viewBox="0 0 12 20"><path d="M1 8l5-7 5 7zM1 12l5 7 5-7z" fill="#a0a3a6"/></svg>
  <svg class="a" style="left:2091px;top:11px" width="12" height="20" viewBox="0 0 12 20"><path d="M1 8l5-7 5 7zM1 12l5 7 5-7z" fill="#a0a3a6"/></svg>
  <svg class="a" style="left:2226px;top:11px" width="12" height="20" viewBox="0 0 12 20"><path d="M1 8l5-7 5 7zM1 12l5 7 5-7z" fill="#a0a3a6"/></svg>
  <svg class="a" style="left:2389px;top:11px" width="12" height="20" viewBox="0 0 12 20"><path d="M1 8l5-7 5 7zM1 12l5 7 5-7z" fill="#a0a3a6"/></svg>
  <svg class="a" style="left:2421px;top:8px" width="24" height="22" viewBox="0 0 24 22"><path d="M3 9V5a4 4 0 0 1 8 0" fill="none" stroke="#afb1b3" stroke-width="2.6"/><rect x="9" y="9" width="14" height="12" fill="#afb1b3"/></svg>
  <svg class="a" style="left:2469px;top:6px" width="32" height="30" viewBox="0 0 32 30"><circle cx="13" cy="13" r="8" fill="none" stroke="#6f7274" stroke-width="4" stroke-dasharray="4 2.3"/><circle cx="13" cy="13" r="4" fill="none" stroke="#6f7274" stroke-width="1.5"/><text x="23" y="28" font-family="Liberation Sans" font-weight="bold" font-size="20" fill="#afb1b3" text-anchor="middle">?</text></svg>
  <svg class="a" style="left:2518px;top:6px" width="28" height="30" viewBox="0 0 28 30"><path d="M7 10a7 7 0 0 1 14 0v2H7z" fill="none" stroke="#6f7274" stroke-width="2.2"/><path d="M3 12h22M8 14v6a6 6 0 0 0 12 0v-6M4 29a10 6 0 0 1 20 0" fill="none" stroke="#6f7274" stroke-width="2.2"/><circle cx="14" cy="6" r="1.6" fill="#6f7274"/></svg>
</div>
</div>

<div class="a" style="left:0;top:46px;width:2558px;height:1482px;border-radius:10px;border:2px solid #646668;border-top-color:#58585a;pointer-events:none"></div>
<div class="a" style="left:0;top:722px;width:880px;height:140px;background:linear-gradient(rgba(0,0,0,0.38),rgba(0,0,0,0.16) 45%,rgba(0,0,0,0));-webkit-mask-image:linear-gradient(90deg,#000 790px,transparent 880px)"></div>
<div id="applet" class="a">
  <div id="atitle" class="a">
    <div class="a" style="left:16px;top:10px;width:24px;height:24px;border-radius:50%;background:#fd5f57;border:1px solid #e1473f"></div>
    <div class="a" style="left:56px;top:10px;width:24px;height:24px;border-radius:50%;background:#febc2e;border:1px solid #e0a027"></div>
    <div class="a" style="left:96px;top:10px;width:24px;height:24px;border-radius:50%;background:#2ac840;border:1px solid #1dad2b"></div>
    <div class="a" style="left:251px;top:9px;font-size:26px;color:#4d4d4d;white-space:nowrap;letter-spacing:0.55px">Applet Viewer: myApplet</div>
  </div>
  <div class="a" style="left:300px;top:94px;width:40px;height:40px;border-radius:50%;background:#ff3b26"></div>
  <div class="a" style="left:0;top:644px;font-size:27px;color:#222222;white-space:nowrap;letter-spacing:0.95px">Applet started.</div>
</div>
<div id="dock" class="a"></div>
<svg class="a" style="left:410px;top:1538px" width="42" height="46" viewBox="0 0 42 46"><defs><linearGradient id="fd" x1="0" x2="1"><stop offset="0" stop-color="#1ea1f1"/><stop offset="1" stop-color="#1a78d8"/></linearGradient></defs><rect x="0" y="3" width="42" height="39" rx="3" fill="url(#fd)"/><path d="M22 3h17a3 3 0 0 1 3 3v33a3 3 0 0 1-3 3H24c-2-8-4-18-2-39z" fill="#eef3f8"/><path d="M8 30c6 5 20 5 28 0" fill="none" stroke="#111" stroke-width="2"/><path d="M14 14v4M30 14v4" stroke="#111" stroke-width="2"/></svg>
<svg class="a" style="left:462px;top:1538px" width="46" height="46" viewBox="0 0 46 46"><circle cx="23" cy="23" r="22" fill="#fff"/><circle cx="23" cy="23" r="20.5" fill="#2a8ff0"/><path d="M23 7L13 37l10-7 10 7z" fill="#e8eef6"/></svg>
<svg class="a" style="left:516px;top:1538px" width="46" height="46" viewBox="0 0 46 46"><circle cx="23" cy="23" r="22" fill="#f2f2f2"/><circle cx="23" cy="23" r="19.5" fill="#2d8ef0"/><circle cx="23" cy="23" r="16" fill="none" stroke="#9cc8f6" stroke-width="1" stroke-dasharray="1 2"/><path d="M35 11L21 21l4 4z" fill="#f04040"/><path d="M11 35l10-14 4 4z" fill="#f4f4f4"/></svg>
<svg class="a" style="left:570px;top:1538px" width="46" height="46" viewBox="0 0 46 46"><circle cx="23" cy="23" r="22" fill="#f0f0f0"/><circle cx="23" cy="23" r="20.5" fill="#1d8ff5"/><path d="M17 9l13 22M29 9L16 31M10 28h26" stroke="#fff" stroke-width="3" stroke-linecap="round"/></svg>
<svg class="a" style="left:624px;top:1538px" width="46" height="46" viewBox="0 0 46 46"><rect x="22" y="8" width="22" height="30" fill="#fff"/><path d="M25 13h17M25 18h17M25 23h17M25 28h17M25 33h17" stroke="#1e3e73" stroke-width="1.6"/><path d="M1 5l26-4v44L1 41z" fill="#2b579a"/><text x="12" y="30" font-family="Liberation Sans" font-weight="bold" font-size="16" fill="#fff" text-anchor="middle">W</text></svg>
<svg class="a" style="left:681px;top:1538px" width="44" height="46" viewBox="0 0 44 46"><path d="M1 4l30-4 12 4v36l-12 5L3 41z" fill="#252526"/><path d="M29 4l12 4v30l-12 5L8 34l16 -1 5-4z" fill="#0e72b8"/><path d="M9 20l9-8 10-5v30l-10-6-9-5z" fill="#1e9ae8" opacity="0.8"/></svg>
<svg class="a" style="left:732px;top:1538px" width="46" height="46" viewBox="0 0 46 46"><circle cx="23" cy="23" r="22" fill="#fff"/><circle cx="23" cy="23" r="20.5" fill="#6f86d4"/><path d="M11 30c0-8 3-14 5-15l4 2h6l4-2c2 1 5 7 5 15-2 2-5 3-7 3l-2-3h-6l-2 3c-2 0-5-1-7-3z" fill="#fff"/><circle cx="18.5" cy="24" r="2.3" fill="#6f86d4"/><circle cx="27.5" cy="24" r="2.3" fill="#6f86d4"/></svg>
<svg class="a" style="left:786px;top:1538px" width="46" height="46" viewBox="0 0 46 46"><circle cx="23" cy="23" r="22" fill="#c8c8c8"/><circle cx="23" cy="23" r="20.5" fill="#9a9ea3"/><path d="M35 9c-8 0-15 6-18 14l-5 2 4 4-3 7 7-3 4 4 2-5c8-3 14-10 14-18z" fill="#3c3f44"/></svg>
<svg class="a" style="left:840px;top:1538px" width="45" height="46" viewBox="0 0 45 46"><rect x="0" y="3" width="45" height="40" rx="3" fill="#8f979c"/><circle cx="22.5" cy="23" r="17" fill="#3a3a3a"/><circle cx="22.5" cy="23" r="12" fill="#b5b5b5"/><circle cx="22.5" cy="23" r="9" fill="#444"/><path d="M22.5 23v-10M22.5 23l8 6M22.5 23l-8 6" stroke="#bbb" stroke-width="3"/></svg>
<svg class="a" style="left:894px;top:1538px" width="46" height="46" viewBox="0 0 46 46"><g transform="rotate(-6 23 23)"><rect x="4" y="4" width="38" height="38" fill="#fbfbfb" stroke="#aaa" stroke-width="1"/><rect x="4" y="4" width="38" height="10" fill="#ec4b42"/><text x="23" y="12.5" font-family="Liberation Sans" font-size="8" fill="#fff" text-anchor="middle">MAR</text><text x="23" y="36" font-family="Liberation Sans" font-size="21" fill="#222" text-anchor="middle">27</text></g></svg>
<svg class="a" style="left:948px;top:1538px" width="46" height="46" viewBox="0 0 46 46"><g transform="rotate(-8 20 22)"><rect x="4" y="10" width="36" height="30" fill="#d6c09a"/><rect x="6" y="12" width="32" height="26" fill="#6fa7d8"/><rect x="6" y="28" width="32" height="10" fill="#3e6ca0"/></g><circle cx="36" cy="35" r="9" fill="#6a6560" stroke="#333" stroke-width="2"/></svg>
<svg class="a" style="left:1001px;top:1538px" width="48" height="46" viewBox="0 0 48 46"><circle cx="24" cy="24" r="23" fill="#f0f0f0"/><circle cx="24" cy="24" r="21" fill="#8a3ab8"/><path d="M14 12l5 4h10l5-4v8c2 3 2 5 1 8-2 4-6 5-11 5s-9-1-11-5c-1-3-1-5 1-8z" fill="#fff"/><path d="M20 33v12h8V33" fill="#fff"/></svg>
<svg class="a" style="left:1057px;top:1538px" width="44" height="46" viewBox="0 0 44 46"><rect x="22" y="7" width="20" height="32" fill="#fff"/><path d="M25 12h15M25 17h15M25 22h15M25 27h15M25 32h15" stroke="#222" stroke-width="1.6"/><path d="M1 4l26-4v46L1 42z" fill="#8f3fc4"/><text x="12" y="31" font-family="Liberation Sans" font-weight="bold" font-size="17" fill="#fff" text-anchor="middle">N</text></svg>
<svg class="a" style="left:1109px;top:1538px" width="48" height="46" viewBox="0 0 48 46"><path d="M2 6l16-5 12 4 16-2 2 24-8 17-18-3L8 44 0 26z" fill="#d94cd2"/><path d="M30 3l16 2 2 22-6 16-14-6z" fill="#8f5ef0"/><rect x="9" y="9" width="30" height="30" fill="#000"/><text x="24" y="26" font-family="Liberation Sans" font-weight="bold" font-size="14" fill="#fff" text-anchor="middle">PS</text><rect x="12" y="33" width="9" height="2" fill="#fff"/></svg>
<svg class="a" style="left:1163px;top:1538px" width="48" height="46" viewBox="0 0 48 46"><path d="M2 6l16-5 12 4 16-2 2 24-8 17-18-3L8 44 0 26z" fill="#f3436e"/><path d="M30 3l16 2 2 22-6 16-14-6z" fill="#3d7ae8"/><rect x="9" y="9" width="30" height="30" fill="#000"/><text x="24" y="26" font-family="Liberation Sans" font-weight="bold" font-size="14" fill="#fff" text-anchor="middle">IJ</text><rect x="12" y="33" width="9" height="2" fill="#fff"/></svg>
<svg class="a" style="left:1217px;top:1538px" width="48" height="46" viewBox="0 0 48 46"><path d="M2 6l16-5 12 4 16-2 2 24-8 17-18-3L8 44 0 26z" fill="#20b7e8"/><path d="M30 3l16 2 2 22-6 16-14-6z" fill="#2c8fe0"/><rect x="9" y="9" width="30" height="30" fill="#000"/><text x="24" y="26" font-family="Liberation Sans" font-weight="bold" font-size="14" fill="#fff" text-anchor="middle">WS</text><rect x="12" y="33" width="9" height="2" fill="#fff"/></svg>
<svg class="a" style="left:1273px;top:1538px" width="44" height="46" viewBox="0 0 44 46"><rect x="22" y="7" width="20" height="32" fill="#fff"/><path d="M25 12h15M25 17h15M25 22h15M25 27h15M25 32h15M32 10v28" stroke="#217346" stroke-width="1.6"/><path d="M1 4l26-4v46L1 42z" fill="#1d6f42"/><text x="12" y="31" font-family="Liberation Sans" font-weight="bold" font-size="17" fill="#fff" text-anchor="middle">X</text></svg>
<svg class="a" style="left:1324px;top:1537px" width="50" height="48" viewBox="0 0 50 48"><circle cx="25" cy="23" r="19" fill="none" stroke="#4ab338" stroke-width="7"/><path d="M9 14a19 19 0 0 1 14-10" fill="none" stroke="#6cd15a" stroke-width="7" stroke-dasharray="2 2"/></svg>
<svg class="a" style="left:1380px;top:1535px" width="52" height="50" viewBox="0 0 52 50"><rect x="1" y="7" width="42" height="36" rx="9" fill="#3ec84a"/><rect x="7" y="17" width="18" height="14" rx="3" fill="#f4f4f4"/><path d="M25 22l8-5v14l-8-5z" fill="#f4f4f4"/><circle cx="33" cy="35" r="9" fill="#f4f4f4"/><path d="M30 31c0 4 3 7 6 7" fill="none" stroke="#3ec84a" stroke-width="2.5"/><circle cx="41" cy="9" r="9" fill="#ee3d34"/><text x="41" y="14" font-family="Liberation Sans" font-size="12" fill="#fff" text-anchor="middle">1</text></svg>
<svg class="a" style="left:1434px;top:1538px" width="46" height="46" viewBox="0 0 46 46"><path d="M23 1a22 22 0 1 1-10 41.5L1 45l3-11A22 22 0 0 1 23 1z" fill="#f2f2f2"/><path d="M23 4a19 19 0 1 1-9 35.5L5 42l2.5-8.5A19 19 0 0 1 23 4z" fill="#4fce5d"/><path d="M15 14c-2 2-2 5 0 9 3 5 7 8 11 9 3 1 5 0 6-2l-1-3-4-2-2 2c-3-1-6-4-7-7l2-2-2-4z" fill="#fff"/></svg>
<svg class="a" style="left:1488px;top:1538px" width="46" height="46" viewBox="0 0 46 46"><circle cx="23" cy="23" r="22" fill="#3bd46a"/><path d="M11 17c8-3 17-2 24 2M13 24c6-2 13-1 19 2M15 31c5-1 10-1 14 1" fill="none" stroke="#121212" stroke-width="3.5" stroke-linecap="round"/></svg>
<svg class="a" style="left:1541px;top:1538px" width="48" height="46" viewBox="0 0 48 46"><path d="M4 8l20-7 18 6 6 12-4 23-20 4L0 36z" fill="#21d789"/><path d="M24 4l18 4 6 14-6 20-18-2z" fill="#fcf84a"/><rect x="9" y="9" width="30" height="30" fill="#000"/><text x="24" y="26" font-family="Liberation Sans" font-weight="bold" font-size="14" fill="#fff" text-anchor="middle">PC</text><rect x="12" y="33" width="9" height="2" fill="#fff"/></svg>
<svg class="a" style="left:1595px;top:1538px" width="48" height="46" viewBox="0 0 48 46"><circle cx="24" cy="24" r="23" fill="#f7c42a"/><path d="M24 1a23 23 0 0 1 20 11.5H24a11.5 11.5 0 0 0-10 6L4 12A23 23 0 0 1 24 1z" fill="#e84335"/><path d="M4 12l10 17.5a11.5 11.5 0 0 0 10 6l-10 11A23 23 0 0 1 4 12z" fill="#3aa757"/><circle cx="24" cy="24" r="10" fill="#fff"/><circle cx="24" cy="24" r="8" fill="#4a86ee"/></svg>
<svg class="a" style="left:1653px;top:1538px" width="42" height="46" viewBox="0 0 42 46"><g transform="rotate(-5 21 23)"><rect x="3" y="4" width="36" height="40" fill="#fdfdf6"/><rect x="3" y="4" width="36" height="7" fill="#f6d744"/><path d="M6 17h30M6 22h30M6 27h30M6 32h30M6 37h30" stroke="#ddd" stroke-width="1"/></g></svg>
<svg class="a" style="left:1704px;top:1538px" width="46" height="46" viewBox="0 0 46 46"><rect x="1" y="4" width="44" height="38" rx="3" fill="#8d8d8d"/><rect x="2.5" y="5.5" width="41" height="35" rx="2" fill="#1d1d1d"/><text x="6" y="16" font-family="Liberation Mono" font-size="10" fill="#fff">&gt;_</text></svg>
<svg class="a" style="left:1758px;top:1538px" width="46" height="46" viewBox="0 0 46 46"><rect x="24" y="8" width="21" height="30" fill="#fff"/><circle cx="34" cy="18" r="5" fill="#444"/><path d="M27 30h15M27 34h15" stroke="#d24726" stroke-width="1.6"/><path d="M1 5l26-4v44L1 41z" fill="#d24726"/><text x="13" y="30" font-family="Liberation Sans" font-weight="bold" font-size="17" fill="#fff" text-anchor="middle">P</text></svg>
<svg class="a" style="left:1810px;top:1536px" width="50" height="50" viewBox="0 0 50 50"><path d="M14 1c5 0 6 2 11 2 12 0 21 9 21 21 0 4-1 5-1 7 0 3 4 5 4 9 0 5-5 9-10 9-4 0-6-2-10-2C17 47 5 37 5 25c0-3 1-5 1-7C6 14 1 12 1 8 1 4 6 1 14 1z" fill="#1c9be6"/><text x="25" y="35" font-family="Liberation Sans" font-weight="bold" font-size="28" fill="#fff" text-anchor="middle">S</text></svg>
<svg class="a" style="left:1868px;top:1538px" width="42" height="46" viewBox="0 0 42 46"><rect x="1" y="4" width="40" height="40" fill="#f6f6f6" stroke="#ccc" stroke-width="1"/><path d="M21 10c-4 4 3 6-1 10M25 13c-3 3 2 4-1 7" fill="none" stroke="#e76f00" stroke-width="1.8"/><path d="M11 28c5 2 15 2 20 0M10 33c6 2 16 2 22 0M14 38c4 1 10 1 14 0" fill="none" stroke="#5382a1" stroke-width="1.8"/></svg>
<div class="a" style="left:1928px;top:1538px;width:2px;height:51px;background:#1b1b1b"></div>
<svg class="a" style="left:1943px;top:1538px" width="48" height="46" viewBox="0 0 48 46"><path d="M1 8a2 2 0 0 1 2-2h14l4 4h24a2 2 0 0 1 2 2v29a2 2 0 0 1-2 2H3a2 2 0 0 1-2-2z" fill="#5ab4e8"/><path d="M1 14h46v27a2 2 0 0 1-2 2H3a2 2 0 0 1-2-2z" fill="#75c9f5"/><circle cx="24" cy="28" r="9" fill="#5fb2e0"/><path d="M24 22v10M20 28l4 4 4-4" stroke="#75c9f5" stroke-width="2.5" fill="none"/></svg>
<svg class="a" style="left:1997px;top:1538px" width="48" height="46" viewBox="0 0 48 46"><path d="M1 8a2 2 0 0 1 2-2h14l4 4h24a2 2 0 0 1 2 2v29a2 2 0 0 1-2 2H3a2 2 0 0 1-2-2z" fill="#5ab4e8"/><path d="M1 14h46v27a2 2 0 0 1-2 2H3a2 2 0 0 1-2-2z" fill="#75c9f5"/><path d="M19 20h8l4 4v12H19z" fill="none" stroke="#5fb2e0" stroke-width="2"/></svg>
<svg class="a" style="left:2051px;top:1538px" width="48" height="46" viewBox="0 0 48 46"><path d="M1 8a2 2 0 0 1 2-2h14l4 4h24a2 2 0 0 1 2 2v29a2 2 0 0 1-2 2H3a2 2 0 0 1-2-2z" fill="#5ab4e8"/><path d="M1 14h46v27a2 2 0 0 1-2 2H3a2 2 0 0 1-2-2z" fill="#75c9f5"/></svg>
<svg class="a" style="left:2110px;top:1537px" width="38" height="48" viewBox="0 0 38 48"><path d="M1 5h36l-4 38a3 3 0 0 1-3 3H8a3 3 0 0 1-3-3z" fill="#d9dcdd"/><ellipse cx="19" cy="5" rx="18" ry="4" fill="#b5b9bb"/></svg>
<div class="a" style="left:428px;top:1590px;width:6px;height:6px;border-radius:50%;background:#0d0d0d"></div>
<div class="a" style="left:482px;top:1590px;width:6px;height:6px;border-radius:50%;background:#0d0d0d"></div>
<div class="a" style="left:536px;top:1590px;width:6px;height:6px;border-radius:50%;background:#0d0d0d"></div>
<div class="a" style="left:644px;top:1590px;width:6px;height:6px;border-radius:50%;background:#0d0d0d"></div>
<div class="a" style="left:1022px;top:1590px;width:6px;height:6px;border-radius:50%;background:#0d0d0d"></div>
<div class="a" style="left:1184px;top:1590px;width:6px;height:6px;border-radius:50%;background:#0d0d0d"></div>
<div class="a" style="left:1508px;top:1590px;width:6px;height:6px;border-radius:50%;background:#0d0d0d"></div>
<div class="a" style="left:1616px;top:1590px;width:6px;height:6px;border-radius:50%;background:#0d0d0d"></div>
<div class="a" style="left:1778px;top:1590px;width:6px;height:6px;border-radius:50%;background:#0d0d0d"></div>
<div class="a" style="left:1832px;top:1590px;width:6px;height:6px;border-radius:50%;background:#0d0d0d"></div>
<div class="a" style="left:1886px;top:1590px;width:6px;height:6px;border-radius:50%;background:#0d0d0d"></div>
</body></html>
